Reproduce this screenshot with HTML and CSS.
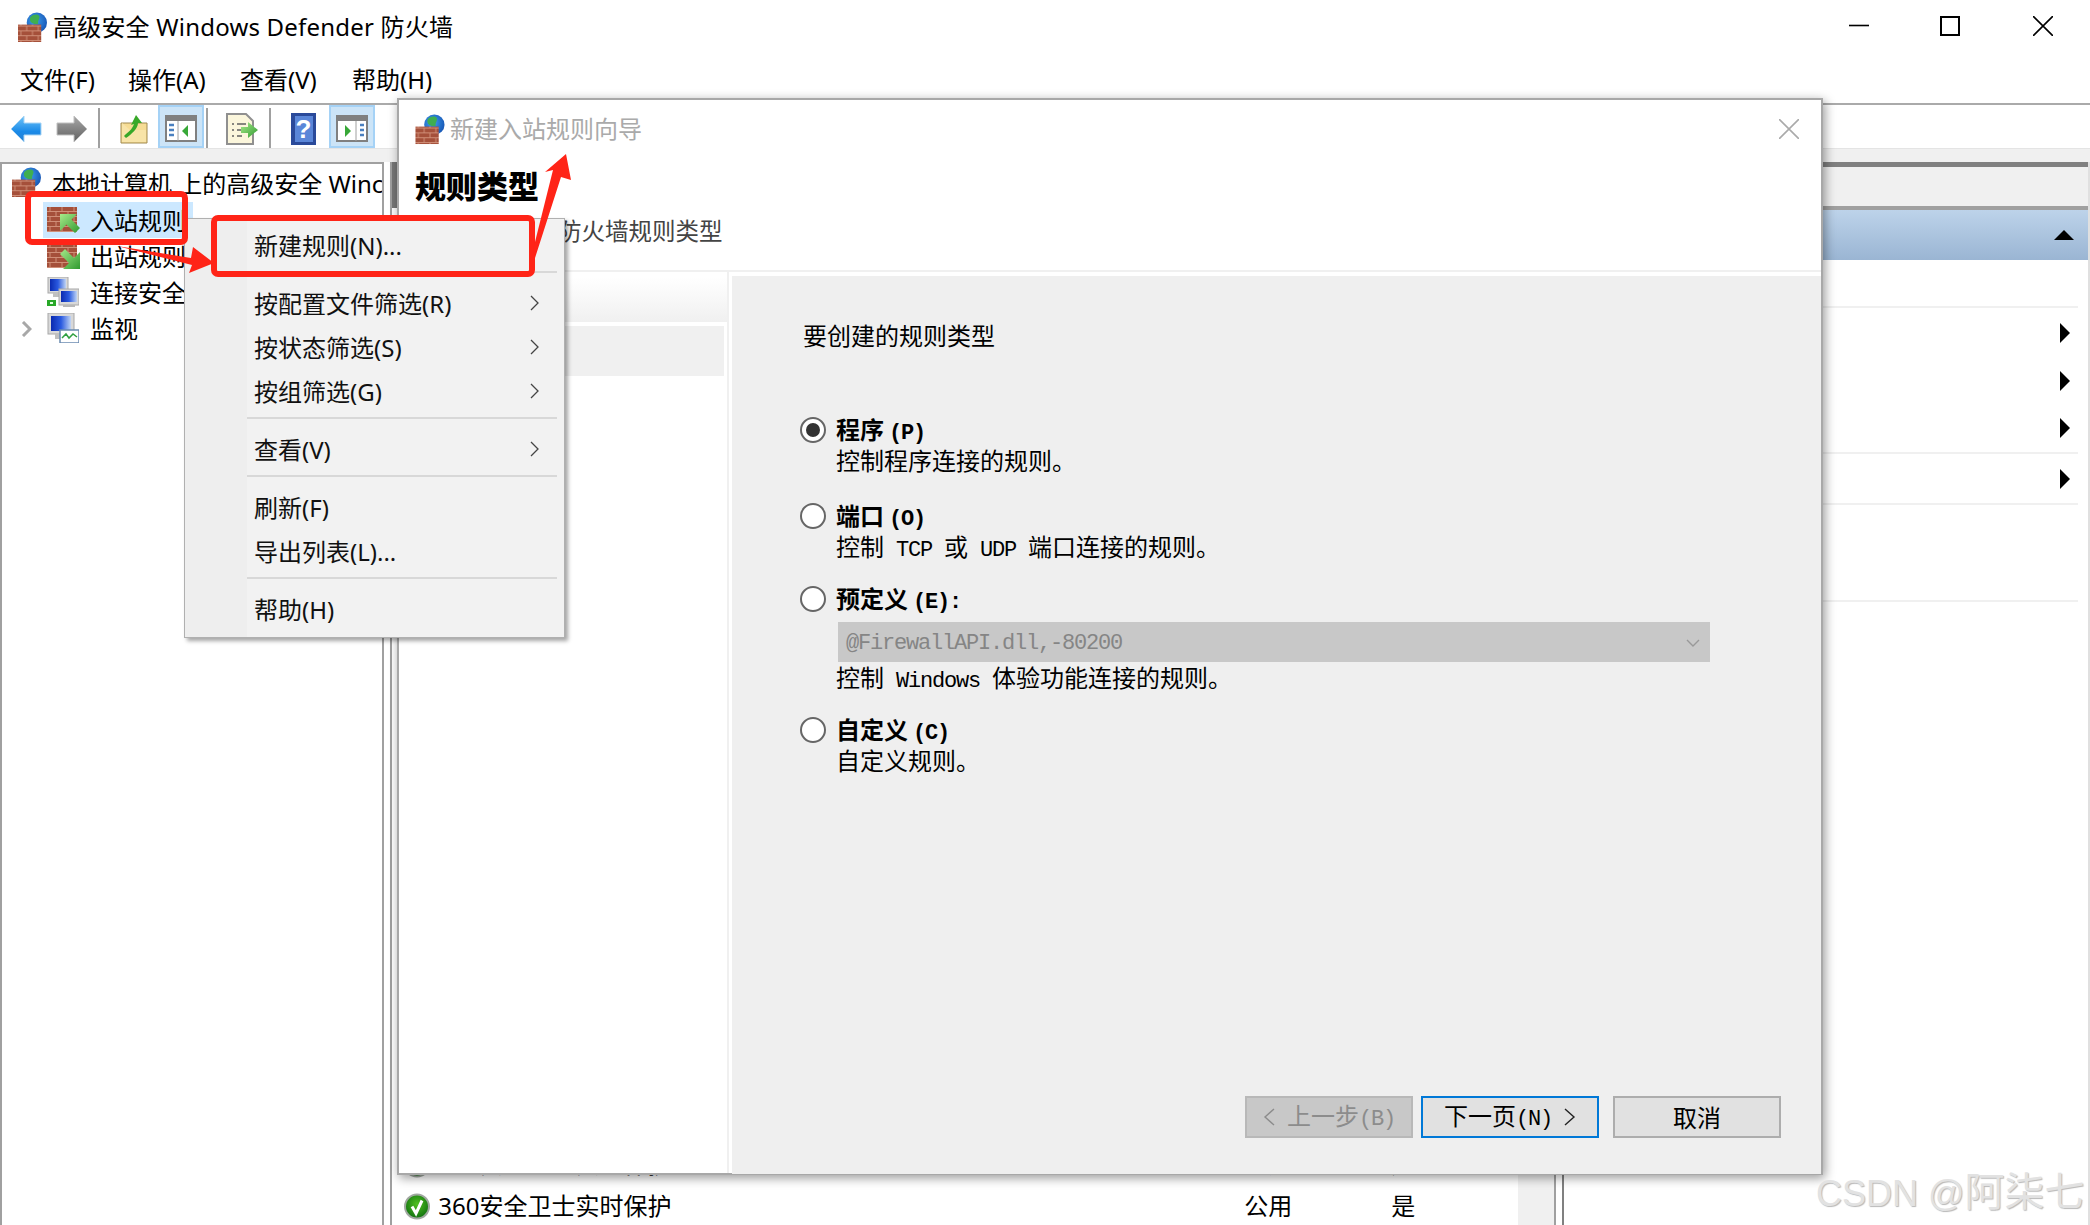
FILE: index.html
```html
<!DOCTYPE html>
<html lang="zh-CN">
<head>
    <meta charset="UTF-8">
    <title>高级安全 Windows Defender 防火墙</title>
    <link rel="stylesheet" href="styles.css">
</head>
<body>
    <svg class="sprite" width="0" height="0">
        <defs>
            <pattern id="brick" width="12" height="10" patternUnits="userSpaceOnUse">
                <rect width="12" height="10" fill="#a5503a"/>
                <path d="M0 4.5H12M0 9.5H12M3 0V4.5M9 5V9.5" stroke="#d08f78" stroke-width="1"/>
            </pattern>
            <radialGradient id="globe" cx="0.4" cy="0.4" r="0.7">
                <stop offset="0" stop-color="#3fa0f0"/>
                <stop offset="1" stop-color="#1450b0"/>
            </radialGradient>
            <linearGradient id="blueArrow" x1="0" y1="0" x2="0" y2="1">
                <stop offset="0" stop-color="#6fc4f8"/>
                <stop offset="0.6" stop-color="#1a8ae8"/>
                <stop offset="1" stop-color="#2a7fd0"/>
            </linearGradient>
            <linearGradient id="grayArrow" x1="0" y1="0" x2="0" y2="1">
                <stop offset="0" stop-color="#a8a8a8"/>
                <stop offset="1" stop-color="#606060"/>
            </linearGradient>
            <linearGradient id="greenArrow" x1="0" y1="0" x2="1" y2="1">
                <stop offset="0" stop-color="#a8ea8a"/>
                <stop offset="1" stop-color="#2f9a30"/>
            </linearGradient>
            <linearGradient id="screen" x1="0" y1="0" x2="1" y2="0">
                <stop offset="0" stop-color="#0a2ab0"/>
                <stop offset="0.5" stop-color="#2a5ae0"/>
                <stop offset="1" stop-color="#c0d4f4"/>
            </linearGradient>
            <radialGradient id="okGreen" cx="0.5" cy="0.4" r="0.6">
                <stop offset="0" stop-color="#50c020"/>
                <stop offset="1" stop-color="#107010"/>
            </radialGradient>

            <symbol id="i-firewall" viewBox="0 0 30 32">
                <circle cx="19.5" cy="11" r="10.5" fill="url(#globe)"/>
                <path d="M13 5c3-3 7-3 9-1 1 3-2 5-1 8-3 1-6 0-8-2-1-2-1-3 0-5z" fill="#3fae50"/>
                <rect x="0" y="13" width="24" height="18" fill="url(#brick)"/>
            </symbol>
            <symbol id="i-wall-in" viewBox="0 0 33 26">
                <rect x="0" y="0" width="30" height="25" fill="url(#brick)"/>
                <path d="M13 7H30L24.500 12.500 33 21 28 26 19.500 17.500 13 24z" fill="url(#greenArrow)"/>
            </symbol>
            <symbol id="i-wall-out" viewBox="0 0 33 26">
                <rect x="0" y="0" width="30" height="25" fill="url(#brick)"/>
                <path d="M18 6 13 11 22 20 16 26H33V9L27 15z" fill="url(#greenArrow)"/>
            </symbol>
            <symbol id="i-secure" viewBox="0 0 32 30">
                <rect x="1" y="0" width="20" height="16" fill="#d8d8d8" stroke="#a8a8a8"/>
                <rect x="3" y="2" width="16" height="12" fill="url(#screen)"/>
                <path d="M6 16H16V20H6z" fill="#c0c0c0"/>
                <rect x="12" y="12" width="20" height="16" fill="#d8d8d8" stroke="#a8a8a8"/>
                <rect x="14" y="14" width="16" height="11" fill="url(#screen)"/>
                <path d="M16 28H28V30H16z" fill="#b8b8b8"/>
                <rect x="0" y="23" width="9" height="6" fill="#28a828"/>
                <rect x="3" y="25" width="3" height="2" fill="#e0ffe0"/>
            </symbol>
            <symbol id="i-monitor" viewBox="0 0 32 30">
                <rect x="1" y="0" width="26" height="21" fill="#d8d8d8" stroke="#a8a8a8"/>
                <rect x="4" y="3" width="20" height="15" fill="url(#screen)"/>
                <path d="M8 21H20V26H8z" fill="#c0c0c0"/>
                <rect x="13" y="17" width="19" height="13" fill="#fff" stroke="#6a8ab0" stroke-width="1.5"/>
                <path d="M15 25 19 21 22 25 26 21 30 24" fill="none" stroke="#30a040" stroke-width="1.5"/>
            </symbol>
            <symbol id="i-back" viewBox="0 0 32 28">
                <path d="M14 1 1 14 14 27V20H31V8H14z" fill="url(#blueArrow)" stroke="#a8d4f4"/>
            </symbol>
            <symbol id="i-forward" viewBox="0 0 32 28">
                <path d="M18 1 31 14 18 27V20H1V8H18z" fill="url(#grayArrow)" stroke="#c0c0c0"/>
            </symbol>
            <symbol id="i-up" viewBox="0 0 28 30">
                <path d="M1 9H27V29H1z" fill="#f6dc94" stroke="#a08a50"/>
                <path d="M2 9 10 16H26V28H2z" fill="#f8e4a8"/>
                <path d="M4 22C8 18 12 16 14 10L11 11 16 1 22 9 18 9C18 14 12 20 6 24z" fill="#38a828"/>
            </symbol>
            <symbol id="i-pane-left" viewBox="0 0 32 27">
                <rect x="1" y="1" width="30" height="25" fill="#fff" stroke="#808080" stroke-width="2"/>
                <rect x="1" y="1" width="30" height="5" fill="#808080"/>
                <path d="M13 6V26" stroke="#a0a0a0"/>
                <path d="M4 10H9M4 15H9M4 20H9" stroke="#4a80c0" stroke-width="2.500"/>
                <path d="M23 10V22L17 16z" fill="#38a838"/>
            </symbol>
            <symbol id="i-pane-right" viewBox="0 0 32 27">
                <rect x="1" y="1" width="30" height="25" fill="#fff" stroke="#808080" stroke-width="2"/>
                <rect x="1" y="1" width="30" height="5" fill="#808080"/>
                <path d="M20 6V26" stroke="#a0a0a0"/>
                <path d="M24 10H28M24 15H28M24 20H28" stroke="#4a80c0" stroke-width="2.500"/>
                <path d="M9 10V22L15 16z" fill="#38a838"/>
            </symbol>
            <symbol id="i-export" viewBox="0 0 32 32">
                <path d="M1 1H20L27 8V31H1z" fill="#fbf6dc" stroke="#909090" stroke-width="2"/>
                <path d="M6 11H8M11 11H20M6 17H8M11 17H16M6 23H8M11 23H16" stroke="#606060" stroke-width="1.500"/>
                <path d="M15 14H22V9L32 17 22 25V20H15z" fill="url(#greenArrow)"/>
            </symbol>
            <symbol id="i-ok" viewBox="0 0 26 26">
                <circle cx="13" cy="13" r="12" fill="url(#okGreen)" stroke="#a0a8a0" stroke-width="2"/>
                <path d="M8 13 12 20 18 7" fill="none" stroke="#fff" stroke-width="3"/>
            </symbol>
        </defs>
    </svg>

    <div class="titlebar">
        <div class="title">
            <svg class="ico-title"><use href="#i-firewall"/></svg>
            <span>高级安全 Windows Defender 防火墙</span>
        </div>
        <div class="win-btns">
            <svg class="win-btn" viewBox="0 0 20 20"><path d="M0 9.500H20" stroke="#000" stroke-width="1.600"/></svg>
            <svg class="win-btn" viewBox="0 0 20 20"><rect x="1" y="1" width="18" height="18" fill="none" stroke="#000" stroke-width="2"/></svg>
            <svg class="win-btn" viewBox="0 0 20 20"><path d="M0 0 20 20M20 0 0 20" stroke="#000" stroke-width="1.600"/></svg>
        </div>
    </div>

    <div class="menubar">
        <span>文件(F)</span>
        <span>操作(A)</span>
        <span>查看(V)</span>
        <span>帮助(H)</span>
    </div>

    <div class="toolbar">
        <svg class="tb-back"><use href="#i-back"/></svg>
        <svg class="tb-forward"><use href="#i-forward"/></svg>
        <div class="tb-sep sep-a"></div>
        <svg class="tb-up"><use href="#i-up"/></svg>
        <div class="tb-toggle"><svg class="tb-pane"><use href="#i-pane-left"/></svg></div>
        <div class="tb-sep sep-b"></div>
        <svg class="tb-export"><use href="#i-export"/></svg>
        <div class="tb-sep sep-c"></div>
        <svg class="tb-help" viewBox="0 0 25 32">
            <rect width="25" height="32" fill="#2a4a9a"/>
            <rect x="4" y="3" width="18" height="26" fill="#5a86d8"/>
            <text x="12.500" y="25" text-anchor="middle" class="help-mark">?</text>
        </svg>
        <div class="tb-toggle toggle-last"><svg class="tb-pane"><use href="#i-pane-right"/></svg></div>
    </div>
    <div class="strip"></div>

    <div class="main">
        <div class="tree">
            <div class="tree-root">
                <svg class="ico-root"><use href="#i-firewall"/></svg>
                <span>本地计算机 上的高级安全 Winc</span>
            </div>
            <div class="tree-row active"><svg class="ico-tree"><use href="#i-wall-in"/></svg><span>入站规则</span></div>
            <div class="tree-row"><svg class="ico-tree"><use href="#i-wall-out"/></svg><span>出站规则</span></div>
            <div class="tree-row"><svg class="ico-tree tall"><use href="#i-secure"/></svg><span>连接安全规则</span></div>
            <div class="tree-row">
                <svg class="expander" viewBox="0 0 11 16"><path d="M2 1 9 8 2 15" fill="none" stroke="#a8a8a8" stroke-width="3"/></svg>
                <svg class="ico-tree tall"><use href="#i-monitor"/></svg><span>监视</span>
            </div>
        </div>

        <div class="list">
            <div class="list-body">
                <div class="list-head"></div>
                <div class="list-rows">
                    <div class="list-row">
                        <svg class="ico-ok"><use href="#i-ok"/></svg>
                        <span class="list-name">360安全卫士实时保护</span>
                        <span>公用</span>
                        <span>是</span>
                    </div>
                    <div class="list-row">
                        <svg class="ico-ok"><use href="#i-ok"/></svg>
                        <span class="list-name">360安全卫士实时保护</span>
                        <span>公用</span>
                        <span>是</span>
                    </div>
                </div>
            </div>
            <div class="list-scroll"></div>
        </div>

        <div class="actions">
            <div class="act-head"></div>
            <div class="act-band"><span class="tri-up"></span></div>
            <div class="act-row r48 line"></div>
            <div class="act-row r49"><span class="tri"></span></div>
            <div class="act-row r47"><span class="tri"></span></div>
            <div class="act-row r50 line"><span class="tri"></span></div>
            <div class="act-row r51 line"><span class="tri"></span></div>
            <div class="act-row r97 line"></div>
        </div>
    </div>

    <!-- wizard dialog -->
    <div class="dialog">
        <div class="dlg-head">
            <div class="dlg-title">
                <svg class="ico-dlg"><use href="#i-firewall"/></svg>
                <span class="dlg-title-text">新建入站规则向导</span>
                <svg class="dlg-close" viewBox="0 0 20 20"><path d="M0 0 20 20M20 0 0 20" stroke="#aaa" stroke-width="1.600"/></svg>
            </div>
            <h1>规则类型</h1>
            <p>指定要创建的防火墙规则类型</p>
        </div>
        <div class="dlg-body">
            <div class="steps">
                <div class="steps-head"></div>
                <div class="step-current"></div>
            </div>
            <div class="dlg-content">
                <div class="question">要创建的规则类型</div>

                <div class="opt opt-1">
                    <span class="radio checked"></span>
                    <div class="opt-text">
                        <div class="opt-label">程序<span class="lat">(P)</span></div>
                        <div class="opt-desc">控制程序连接的规则。</div>
                    </div>
                </div>
                <div class="opt opt-2">
                    <span class="radio"></span>
                    <div class="opt-text">
                        <div class="opt-label">端口<span class="lat">(O)</span></div>
                        <div class="opt-desc">控制<span class="lat"> TCP </span>或<span class="lat"> UDP </span>端口连接的规则。</div>
                    </div>
                </div>
                <div class="opt opt-3">
                    <span class="radio"></span>
                    <div class="opt-text">
                        <div class="opt-label">预定义<span class="lat">(E):</span></div>
                        <div class="combo">
                            <span class="lat">@FirewallAPI.dll,-80200</span>
                            <svg class="combo-arrow" viewBox="0 0 14 8"><path d="M1 1 7 7 13 1" fill="none" stroke="#999" stroke-width="1.400"/></svg>
                        </div>
                        <div class="opt-desc">控制<span class="lat"> Windows </span>体验功能连接的规则。</div>
                    </div>
                </div>
                <div class="opt opt-4">
                    <span class="radio"></span>
                    <div class="opt-text">
                        <div class="opt-label">自定义<span class="lat">(C)</span></div>
                        <div class="opt-desc">自定义规则。</div>
                    </div>
                </div>

                <div class="dlg-btns">
                    <div class="btn disabled">
                        <svg class="btn-chev" viewBox="0 0 12 18"><path d="M11 1 2 9 11 17" fill="none" stroke="#8c8c8c" stroke-width="1.400"/></svg>
                        <span>上一步<span class="lat">(B)</span></span>
                    </div>
                    <div class="btn primary">
                        <span>下一页<span class="lat">(N)</span></span>
                        <svg class="btn-chev" viewBox="0 0 12 18"><path d="M1 1 10 9 1 17" fill="none" stroke="#222" stroke-width="1.400"/></svg>
                    </div>
                    <div class="btn">取消</div>
                </div>
            </div>
        </div>
    </div>

    <!-- right click menu -->
    <div class="ctx">
        <div class="ctx-item">新建规则(N)...</div>
        <div class="ctx-sep"></div>
        <div class="ctx-item">按配置文件筛选(R)<svg class="ctx-more" viewBox="0 0 9 16"><path d="M1 1 8 8 1 15" fill="none" stroke="#444" stroke-width="1.300"/></svg></div>
        <div class="ctx-item">按状态筛选(S)<svg class="ctx-more" viewBox="0 0 9 16"><path d="M1 1 8 8 1 15" fill="none" stroke="#444" stroke-width="1.300"/></svg></div>
        <div class="ctx-item">按组筛选(G)<svg class="ctx-more" viewBox="0 0 9 16"><path d="M1 1 8 8 1 15" fill="none" stroke="#444" stroke-width="1.300"/></svg></div>
        <div class="ctx-sep"></div>
        <div class="ctx-item">查看(V)<svg class="ctx-more" viewBox="0 0 9 16"><path d="M1 1 8 8 1 15" fill="none" stroke="#444" stroke-width="1.300"/></svg></div>
        <div class="ctx-sep"></div>
        <div class="ctx-item">刷新(F)</div>
        <div class="ctx-item">导出列表(L)...</div>
        <div class="ctx-sep"></div>
        <div class="ctx-item">帮助(H)</div>
    </div>

    <!-- red marks drawn on top of the screenshot -->
    <svg class="marks" viewBox="0 0 2090 1225">
        <rect x="28" y="194" width="157" height="48" rx="4" fill="none" stroke="#ff2417" stroke-width="6"/>
        <rect x="214" y="218" width="318" height="56" rx="4" fill="none" stroke="#ff2417" stroke-width="6"/>
        <polygon points="117,246 191,258 193,247 214,263 189,273 192,265" fill="#ff2417"/>
        <polygon points="533,250 553,170 545,172 566,154 571,180 561,177 535,258" fill="#ff2417"/>
    </svg>

    <div class="watermark">CSDN @<span class="wm-cjk">阿柒七</span></div>
</body>
</html>
```

FILE: styles.css
```css
* {
    margin: 0;
    padding: 0;
    box-sizing: border-box;
}

html, body {
    width: 2090px;
    height: 1225px;
    overflow: hidden;
}

body {
    position: relative;
    display: flex;
    flex-direction: column;
    background: #fff;
    color: #000;
    font-family: "Noto Sans", "Noto Sans CJK SC", sans-serif;
    font-size: 24px;
}

.sprite {
    position: absolute;
}

svg {
    display: block;
    flex-shrink: 0;
}

/* title and menu */
.titlebar {
    height: 56px;
    display: flex;
    justify-content: space-between;
    align-items: flex-start;
}

.title {
    display: flex;
    align-items: center;
    height: 54px;
    padding-left: 18px;
    line-height: 54px;
    letter-spacing: 0.2px;
}

.ico-title {
    width: 29px;
    height: 31px;
    margin-right: 6px;
}

.win-btns {
    display: flex;
    padding-top: 16px;
    padding-right: 37px;
}

.win-btn {
    width: 20px;
    height: 20px;
    margin-left: 71px;
}

.win-btn:first-child {
    margin-left: 0;
}

.win-btn:last-child {
    margin-left: 73px;
}

.menubar {
    height: 47px;
    display: flex;
    padding-left: 20px;
    line-height: 47px;
}

.menubar span {
    width: 112px;
}

.menubar span:first-child {
    width: 108px;
}

/* toolbar */
.toolbar {
    height: 46px;
    display: flex;
    align-items: center;
    border-top: 2px solid #aaa;
    border-bottom: 1px solid #e4e4e4;
}

.tb-back {
    width: 32px;
    height: 28px;
    margin-left: 10px;
    margin-top: 4px;
}

.tb-forward {
    width: 32px;
    height: 28px;
    margin-left: 14px;
    margin-top: 4px;
}

.tb-sep {
    width: 2px;
    height: 40px;
    background: #a0a0a0;
    margin-top: 2px;
}

.sep-a {
    margin-left: 10px;
}

.sep-b {
    margin-left: 2px;
}

.sep-c {
    margin-left: 11px;
}

.tb-up {
    width: 28px;
    height: 30px;
    margin-left: 20px;
    margin-top: 4px;
}

.tb-toggle {
    width: 46px;
    height: 43px;
    margin-left: 10px;
    padding-top: 4px;
    display: flex;
    justify-content: center;
    align-items: center;
    background: #cce4f7;
    border: 2px solid #a5d2f6;
}

.toggle-last {
    margin-left: 13px;
}

.tb-pane {
    width: 32px;
    height: 27px;
}

.tb-export {
    width: 32px;
    height: 32px;
    margin-left: 18px;
    margin-top: 4px;
}

.tb-help {
    width: 25px;
    height: 32px;
    margin-left: 20px;
    margin-top: 4px;
}

.help-mark {
    font-family: "Liberation Sans", sans-serif;
    font-weight: bold;
    font-size: 26px;
    fill: #fff;
}

.strip {
    height: 13px;
    background: #f0f0f0;
}

/* three panes */
.main {
    flex: 1;
    display: flex;
    min-height: 0;
}

.tree {
    width: 385px;
    border: 2px solid #a0a0a0;
    border-bottom: none;
    overflow: hidden;
}

.tree-root {
    height: 38px;
    display: flex;
    align-items: center;
    padding-left: 10px;
    padding-right: 1px;
    padding-bottom: 2px;
    white-space: nowrap;
    overflow: hidden;
}

.ico-root {
    width: 29px;
    height: 31px;
    margin-right: 11px;
}

.tree-row {
    position: relative;
    width: 150px;
    height: 36px;
    margin-left: 41px;
    padding-left: 4px;
    display: flex;
    align-items: center;
    white-space: nowrap;
}

.tree-row span {
    margin-bottom: 2px;
}

.tree-row.active {
    background: #cce8ff;
}

.ico-tree {
    width: 33px;
    height: 26px;
    margin-right: 10px;
}

.ico-tree.tall {
    width: 32px;
    height: 30px;
    margin-right: 11px;
}

.expander {
    position: absolute;
    left: -22px;
    top: 11px;
    width: 11px;
    height: 16px;
}

.list {
    width: 1168px;
    margin-left: 6px;
    display: flex;
    border-left: 2px solid #a0a0a0;
    border-right: 2px solid #a0a0a0;
}

.list-body {
    flex: 1;
    display: flex;
    flex-direction: column;
    justify-content: space-between;
}

.list-head {
    height: 46px;
    background: #777;
}

.list-rows {
    margin-bottom: -1px;
}

.list-row {
    height: 40px;
    display: grid;
    grid-template-columns: 34px 806px 147px 1fr;
    align-items: center;
    padding-left: 12px;
    line-height: 40px;
    white-space: nowrap;
}

.list-row + .list-row {
    margin-top: 2px;
}

.ico-ok {
    width: 26px;
    height: 27px;
}

.list-scroll {
    width: 36px;
    background: #f0f0f0;
}

.actions {
    width: 529px;
    margin-left: 6px;
    border-left: 2px solid #808080;
    border-right: 2px solid #e0e0e0;
}

.act-head {
    height: 48px;
    background: #f0f0f0;
    border-top: 5px solid #808080;
    border-bottom: 4px solid #a0a0a0;
}

.act-band {
    height: 50px;
    display: flex;
    justify-content: flex-end;
    align-items: center;
    padding-right: 14px;
    background: linear-gradient(to bottom, #bdd3ea, #9ab5d3);
}

.tri-up {
    width: 0;
    height: 0;
    border-left: 10px solid transparent;
    border-right: 10px solid transparent;
    border-bottom: 10px solid #000;
}

.act-row {
    display: flex;
    justify-content: flex-end;
    align-items: center;
    margin-right: 10px;
    padding-right: 8px;
}

.act-row.line {
    border-bottom: 2px solid #f0f0f0;
}

.r47 { height: 47px; }
.r48 { height: 48px; }
.r49 { height: 49px; }
.r50 { height: 50px; }
.r51 { height: 51px; }
.r97 { height: 97px; }

.tri {
    width: 0;
    height: 0;
    border-top: 10px solid transparent;
    border-bottom: 10px solid transparent;
    border-left: 10px solid #000;
}

/* wizard dialog */
.dialog {
    position: absolute;
    left: 397px;
    top: 98px;
    width: 1426px;
    height: 1077px;
    display: flex;
    flex-direction: column;
    background: #fff;
    border: 2px solid #a8a8a8;
    box-shadow: 2px 3px 10px rgba(0, 0, 0, 0.4);
}

.dlg-head {
    height: 172px;
    padding-left: 16px;
    border-bottom: 2px solid #f0f0f0;
}

.dlg-title {
    height: 58px;
    display: flex;
    align-items: center;
    line-height: 58px;
}

.ico-dlg {
    width: 30px;
    height: 31px;
    margin-right: 5px;
}

.dlg-title-text {
    flex: 1;
    color: #aaa;
}

.dlg-close {
    width: 20px;
    height: 20px;
    margin-right: 22px;
}

h1 {
    font-size: 31px;
    font-weight: 900;
    font-family: "Noto Sans CJK SC", sans-serif;
    line-height: 54px;
}

.dlg-head p {
    margin-left: 2px;
    color: #444;
    font-size: 23.500px;
    line-height: 38px;
}

.dlg-body {
    flex: 1;
    display: flex;
    min-height: 0;
}

.steps {
    width: 330px;
    padding-top: 5px;
    border-right: 2px solid #f0f0f0;
}

.steps-head {
    height: 45px;
    background: linear-gradient(to bottom, #fff, #f0f0f0);
}

.step-current {
    height: 50px;
    margin-top: 4px;
    margin-right: 3px;
    background: #f0f0f0;
}

.dlg-content {
    flex: 1;
    margin-left: 3px;
    margin-top: 4px;
    margin-bottom: -1px;
    display: flex;
    flex-direction: column;
    padding: 42px 40px 36px 68px;
    background: #efefef;
}

.question {
    height: 36px;
    padding-left: 3px;
    line-height: 36px;
}

.lat {
    font-family: "Liberation Mono", monospace;
    font-size: 22px;
    letter-spacing: -1.200px;
    white-space: pre;
}

.opt {
    display: flex;
    align-items: flex-start;
}

.opt-1 { margin-top: 60px; }
.opt-2 { margin-top: 24px; }
.opt-3 { margin-top: 21px; }
.opt-4 { margin-top: 21px; }

.radio {
    flex-shrink: 0;
    width: 26px;
    height: 26px;
    margin-top: 3px;
    margin-right: 10px;
    display: flex;
    justify-content: center;
    align-items: center;
    background: #fff;
    border: 2px solid #666;
    border-radius: 50%;
}

.radio.checked::after {
    content: "";
    width: 14px;
    height: 14px;
    border-radius: 50%;
    background: #333;
}

.opt-label {
    height: 30px;
    line-height: 30px;
    font-weight: 700;
    font-family: "Noto Sans CJK SC", sans-serif;
}

.opt-label .lat {
    margin-left: 5px;
}

.opt-desc {
    height: 32px;
    line-height: 32px;
    font-family: "Noto Sans CJK SC", sans-serif;
    font-weight: 400;
}

.combo {
    width: 872px;
    height: 40px;
    margin-top: 9px;
    margin-bottom: -1px;
    margin-left: 2px;
    padding: 2px 10px 0 8px;
    display: flex;
    justify-content: space-between;
    align-items: center;
    background: #c8c8c8;
    color: #858585;
}

.combo-arrow {
    width: 14px;
    height: 8px;
}

.dlg-btns {
    margin-top: auto;
    display: flex;
    justify-content: flex-end;
}

.btn {
    width: 168px;
    height: 42px;
    display: flex;
    justify-content: center;
    align-items: center;
    gap: 12px;
    line-height: 38px;
    background: #e1e1e1;
    border: 2px solid #adadad;
    font-family: "Noto Sans CJK SC", sans-serif;
}

.btn.disabled {
    background: #c8c8c8;
    border-color: #b8b8b8;
    color: #8c8c8c;
}

.btn.primary {
    width: 178px;
    margin-left: 8px;
    margin-right: 14px;
    border-color: #0078d7;
}

.btn-chev {
    width: 12px;
    height: 18px;
}

/* context menu */
.ctx {
    position: absolute;
    left: 184px;
    top: 218px;
    width: 381px;
    height: 420px;
    padding-top: 6px;
    background: linear-gradient(to right, #eeeeee 62px, #f2f2f2 62px);
    border: 1px solid #b0b0b0;
    box-shadow: 3px 3px 4px rgba(0, 0, 0, 0.35);
}

.ctx-item {
    height: 44px;
    display: flex;
    justify-content: space-between;
    align-items: center;
    padding-left: 69px;
    padding-right: 25px;
    padding-bottom: 2px;
    line-height: 42px;
    color: #111;
}

.ctx-more {
    width: 9px;
    height: 16px;
    margin-top: -2px;
}

.ctx-sep {
    height: 2px;
    margin: 2px 7px 10px 62px;
    background: #d8d8d8;
}

/* annotations */
.marks {
    position: absolute;
    left: 0;
    top: 0;
    width: 2090px;
    height: 1225px;
    pointer-events: none;
}

.watermark {
    position: absolute;
    left: 1816px;
    top: 1166px;
    font-family: "Liberation Sans", "Noto Sans CJK SC", sans-serif;
    font-size: 36px;
    line-height: 52px;
    white-space: nowrap;
    color: #e2e2e2;
    text-shadow: 1px 1px 1px #b8b8b8;
}

.wm-cjk {
    font-size: 40px;
}
```
